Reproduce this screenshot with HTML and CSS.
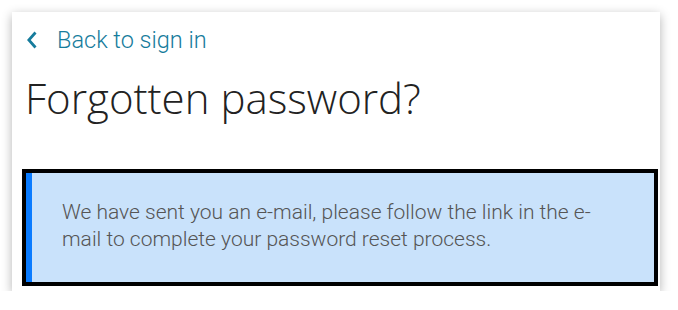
FILE: index.html
```html
<!DOCTYPE html>
<html lang="en">

<head>
    <meta charset="UTF-8">
    <meta name="viewport" content="width=device-width, initial-scale=1.0">
    <link rel="stylesheet" href="styles.css">
    <title>Forgotten password</title>
</head>

<body>

    <div class="card">
        <a class="backLink" href="#">
            <svg class="chevron" width="10" height="18" viewBox="0 0 10 18">
                <path d="M8.5 1.5 L1.8 9 L8.5 16.5" fill="none" stroke="#167c9c" stroke-width="2.8" />
            </svg>
            <span>Back to sign in</span>
        </a>
        <h1 class="title">Forgotten password?</h1>
        <div class="notice">
            <p>We have sent you an e-mail, please follow the link in the e-mail to complete your password reset process.</p>
        </div>
    </div>

</body>

</html>
```
FILE: styles.css
```css
* {
    margin: 0;
    padding: 0;
}

body {
    background-color: #fff;
    font-family: Roboto, "Liberation Sans", sans-serif;
}

.card {
    width: 648px;
    height: 279px;
    margin: 12px 0 0 12px;
    padding: 13px 2px 0 10px;
    box-sizing: border-box;
    background-color: #fff;
    box-shadow: 0 3px 10px rgba(0, 0, 0, 0.3);
}

.card .backLink {
    display: flex;
    align-items: center;
    gap: 20px;
    padding-left: 5px;
    height: 30px;
    color: #167c9c;
    font-size: 23.5px;
    font-weight: 300;
    text-decoration: none;
}

.card .title {
    margin: 14px 0 0 3px;
    font-family: "Open Sans", sans-serif;
    font-size: 42px;
    font-weight: 300;
    line-height: 58px;
    color: #222;
}

.card .notice {
    height: 117px;
    margin-top: 42px;
    box-sizing: border-box;
    border: 4px solid #000;
    background-color: #c9e2fb;
    padding: 26px 20px 0 36px;
    position: relative;
}

.card .notice::before {
    content: "";
    position: absolute;
    left: 0;
    top: 0;
    bottom: 0;
    width: 6px;
    background-color: #0a7bff;
}

.card .notice p {
    width: 545px;
    font-size: 21px;
    font-weight: 300;
    line-height: 27px;
    color: #555;
}
```
